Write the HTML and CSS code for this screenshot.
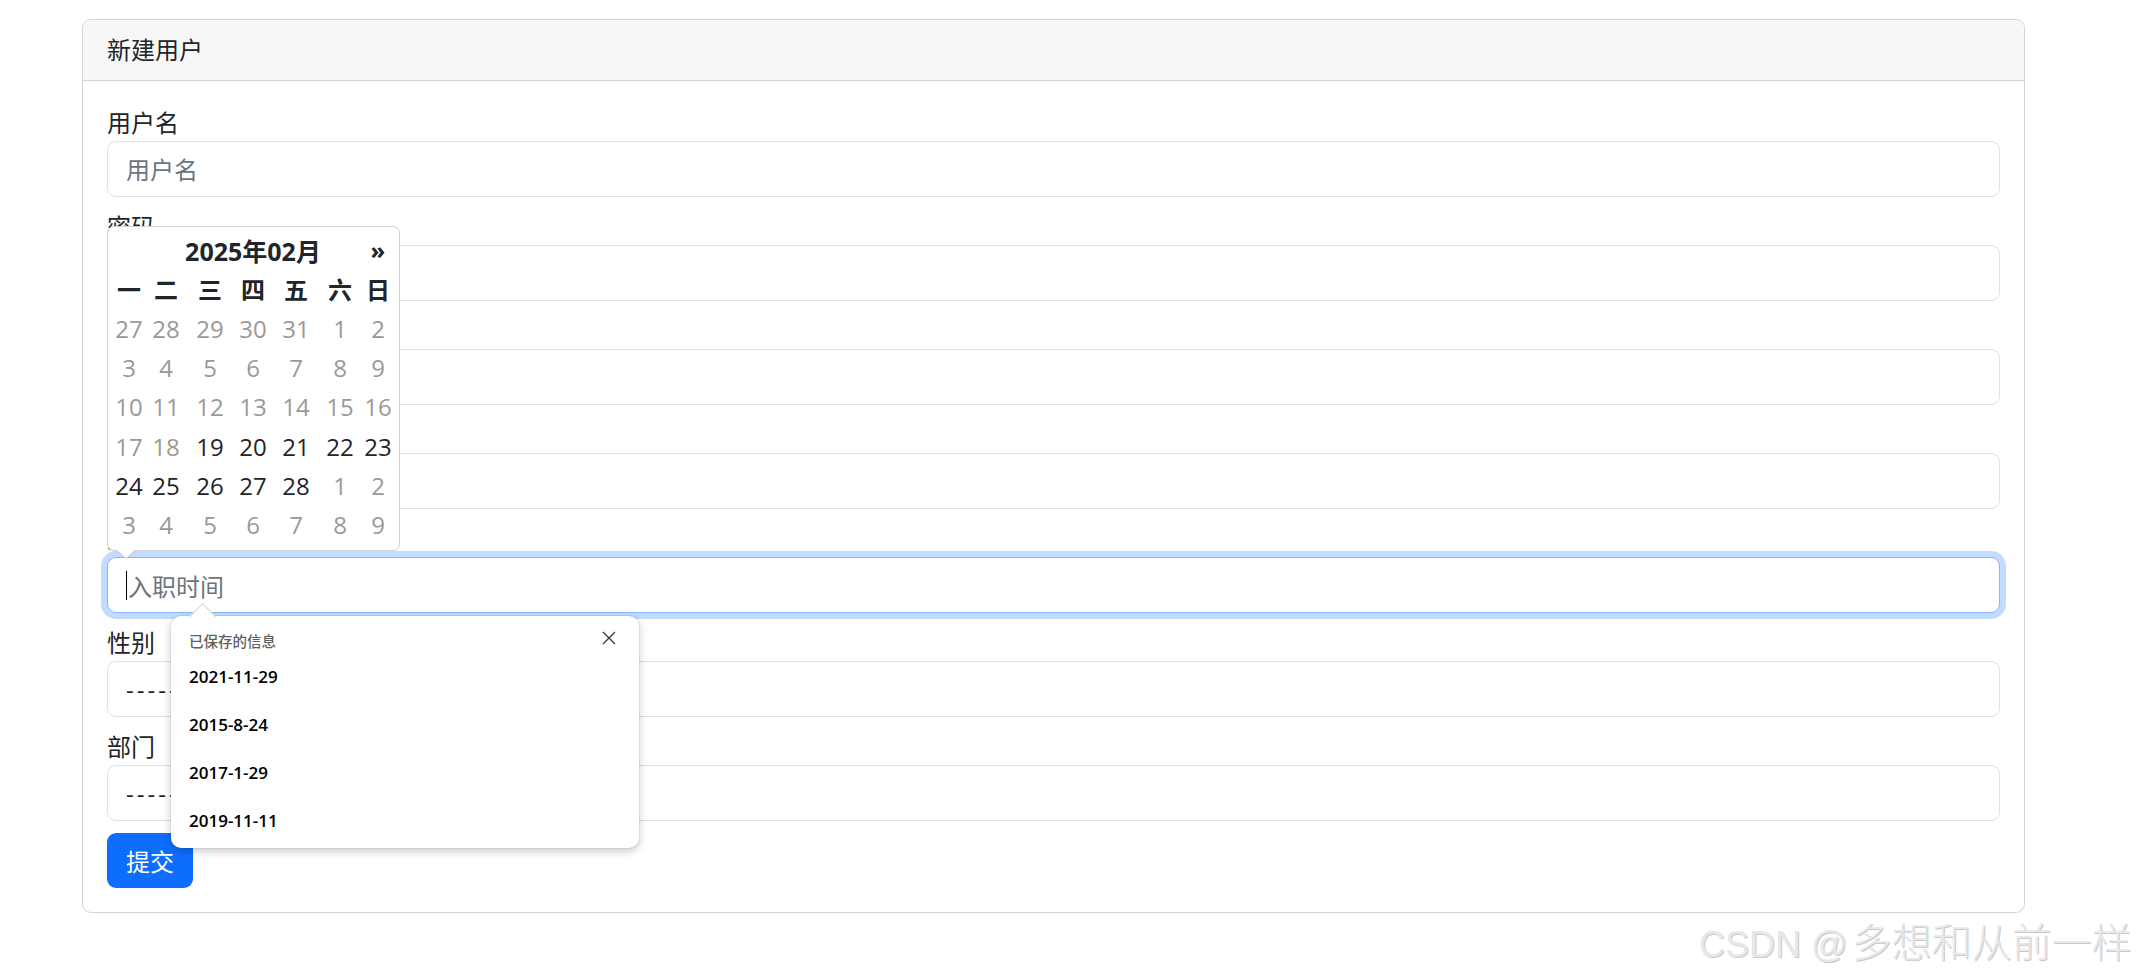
FILE: index.html
```html
<!DOCTYPE html>
<html lang="zh-CN">
<head>
<meta charset="utf-8">
<title>新建用户</title>
<link rel="stylesheet" href="styles.css">
</head>
<body>
<div class="page">
  <div class="card">
    <div class="card-header">新建用户</div>
    <div class="card-body">
      <form class="user-form">
        <div class="field">
          <label class="field-label">用户名</label>
          <input class="form-control" type="text" placeholder="用户名">
        </div>
        <div class="field">
          <label class="field-label">密码</label>
          <input class="form-control" type="password" placeholder="密码">
        </div>
        <div class="field">
          <label class="field-label">年龄</label>
          <input class="form-control" type="text" placeholder="年龄">
        </div>
        <div class="field">
          <label class="field-label">账户余额</label>
          <input class="form-control" type="text" placeholder="账户余额">
        </div>
        <div class="field">
          <label class="field-label">入职时间</label>
          <div class="form-control is-focused"><span class="caret"></span><span class="placeholder">入职时间</span></div>
        </div>
        <div class="field">
          <label class="field-label">性别</label>
          <div class="form-control"><span class="empty-choice">---------</span></div>
        </div>
        <div class="field">
          <label class="field-label">部门</label>
          <div class="form-control"><span class="empty-choice">---------</span></div>
        </div>
        <button class="btn-primary" type="button">提交</button>
      </form>
    </div>
  </div>

  <div class="datepicker">
    <div class="dp-grid">
      <div class="dp-cell dp-head"></div>
      <div class="dp-cell dp-head dp-switch">2025年02月</div>
      <div class="dp-cell dp-head">»</div>

      <div class="dp-cell dp-head">一</div>
      <div class="dp-cell dp-head">二</div>
      <div class="dp-cell dp-head">三</div>
      <div class="dp-cell dp-head">四</div>
      <div class="dp-cell dp-head">五</div>
      <div class="dp-cell dp-head">六</div>
      <div class="dp-cell dp-head">日</div>

      <div class="dp-cell off">27</div><div class="dp-cell off">28</div><div class="dp-cell off">29</div><div class="dp-cell off">30</div><div class="dp-cell off">31</div><div class="dp-cell off">1</div><div class="dp-cell off">2</div>
      <div class="dp-cell off">3</div><div class="dp-cell off">4</div><div class="dp-cell off">5</div><div class="dp-cell off">6</div><div class="dp-cell off">7</div><div class="dp-cell off">8</div><div class="dp-cell off">9</div>
      <div class="dp-cell off">10</div><div class="dp-cell off">11</div><div class="dp-cell off">12</div><div class="dp-cell off">13</div><div class="dp-cell off">14</div><div class="dp-cell off">15</div><div class="dp-cell off">16</div>
      <div class="dp-cell off">17</div><div class="dp-cell off">18</div><div class="dp-cell">19</div><div class="dp-cell">20</div><div class="dp-cell">21</div><div class="dp-cell">22</div><div class="dp-cell">23</div>
      <div class="dp-cell">24</div><div class="dp-cell">25</div><div class="dp-cell">26</div><div class="dp-cell">27</div><div class="dp-cell">28</div><div class="dp-cell off">1</div><div class="dp-cell off">2</div>
      <div class="dp-cell off">3</div><div class="dp-cell off">4</div><div class="dp-cell off">5</div><div class="dp-cell off">6</div><div class="dp-cell off">7</div><div class="dp-cell off">8</div><div class="dp-cell off">9</div>
    </div>
  </div>

  <div class="autofill">
    <span class="af-arrow"></span>
    <div class="af-title">
      <span>已保存的信息</span>
      <svg class="af-close" width="16" height="16" viewBox="0 0 16 16"><path d="M2 2 L14 14 M14 2 L2 14" stroke="#333" stroke-width="1.2" fill="none"/></svg>
    </div>
    <div class="af-item">2021-11-29</div>
    <div class="af-item">2015-8-24</div>
    <div class="af-item">2017-1-29</div>
    <div class="af-item">2019-11-11</div>
  </div>

  <div class="watermark"><span class="wm-latin">CSDN @</span><span class="wm-cjk">多想和从前一样</span></div>
</div>
</body>
</html>
```

FILE: styles.css
```css
html, body {
  margin: 0;
  padding: 0;
  background: #fff;
  overflow: hidden;
}

body {
  font-family: "Open Sans", "Noto Sans CJK SC", sans-serif;
  color: #212529;
}

.page {
  position: relative;
  width: 2149px;
  height: 976px;
  padding: 19px 0 0 82px;
  box-sizing: border-box;
}

.card {
  width: 1943px;
  box-sizing: border-box;
  border: 1px solid #d4d4d4;
  border-radius: 9px;
  background: #fff;
}

.card-header {
  padding: 12px 24px;
  font-size: 24px;
  line-height: 36px;
  background: #f7f7f7;
  border-bottom: 1px solid #d4d4d4;
  border-radius: 9px 9px 0 0;
}

.card-body {
  padding: 24px;
}

.user-form {
  display: flex;
  flex-direction: column;
  align-items: flex-start;
}

.field {
  width: 100%;
  margin-bottom: 12px;
}

.field-label {
  display: block;
  font-size: 24px;
  line-height: 36px;
}

.form-control {
  display: flex;
  align-items: center;
  width: 100%;
  height: 56px;
  box-sizing: border-box;
  padding: 0 18px;
  border: 1px solid #dee2e6;
  border-radius: 9px;
  font-family: "Open Sans", "Noto Sans CJK SC", sans-serif;
  font-size: 24px;
  color: #212529;
  background: #fff;
  outline: none;
}

.form-control::placeholder {
  color: #6c757d;
}

.placeholder {
  color: #6c757d;
}

.empty-choice {
  letter-spacing: 3px;
}

.is-focused {
  border-color: #86b7fe;
  box-shadow: 0 0 0 6px rgba(13, 110, 253, 0.25);
}

.caret {
  display: inline-block;
  width: 1px;
  height: 29px;
  background: #000;
  margin-right: 1px;
}

.btn-primary {
  height: 55px;
  padding: 0 19px;
  border: none;
  border-radius: 9px;
  background: #0d6efd;
  color: #fff;
  font-family: "Open Sans", "Noto Sans CJK SC", sans-serif;
  font-size: 24px;
}

/* date picker overlay */
.datepicker {
  position: absolute;
  left: 107px;
  top: 226px;
  width: 293px;
  height: 325px;
  box-sizing: border-box;
  padding: 3px 5px 2px 6px;
  border: 1px solid #d0d0d0;
  border-radius: 7px;
  background: #fff;
}

.datepicker::before {
  content: "";
  position: absolute;
  left: 8px;
  top: 100%;
  border-left: 10px solid transparent;
  border-right: 10px solid transparent;
  border-top: 9px solid #c8c8c8;
}

.datepicker::after {
  content: "";
  position: absolute;
  left: 9px;
  top: 100%;
  border-left: 9px solid transparent;
  border-right: 9px solid transparent;
  border-top: 8px solid #fff;
}

.dp-grid {
  display: grid;
  grid-template-columns: 30px 44px 44px 42px 44px 44px 32px;
  grid-auto-rows: 39.3px;
  font-size: 24px;
}

.dp-cell {
  display: flex;
  align-items: center;
  justify-content: center;
  color: #212529;
  white-space: nowrap;
}

.dp-cell.off {
  color: #999;
}

.dp-head {
  font-weight: 700;
}

.dp-switch {
  grid-column: span 5;
  font-size: 25px;
}

/* browser autofill overlay */
.autofill {
  position: absolute;
  left: 171px;
  top: 616px;
  width: 468px;
  height: 232px;
  box-sizing: border-box;
  padding: 12px 0 0 0;
  background: #fff;
  border-radius: 10px;
  box-shadow: 0 3px 10px rgba(0, 0, 0, 0.22), 0 0 0 1px rgba(0, 0, 0, 0.05);
}

.af-arrow {
  position: absolute;
  left: 22px;
  top: -9px;
  width: 18px;
  height: 18px;
  background: #fff;
  border-top: 1px solid #d6d6d6;
  border-left: 1px solid #d6d6d6;
  transform: rotate(45deg);
}

.af-title {
  display: flex;
  align-items: center;
  justify-content: space-between;
  height: 24px;
  padding: 0 22px 0 18px;
  font-family: "Noto Sans CJK SC", sans-serif;
  font-size: 14.5px;
  font-weight: 500;
  color: #5f5f5f;
}

.af-close {
  display: block;
  margin-top: -4px;
}

.af-item {
  display: flex;
  align-items: center;
  height: 48px;
  padding-left: 18px;
  font-family: "Open Sans", sans-serif;
  font-size: 17px;
  font-weight: 600;
  color: #000;
}

.watermark {
  position: absolute;
  left: 1699px;
  top: 914px;
  line-height: 52px;
  color: #e8e8e8;
  text-shadow: 1px 1px 0 #c9c9c9;
  white-space: nowrap;
}

.wm-latin {
  font-family: "Liberation Sans", sans-serif;
  font-size: 36px;
}

.wm-cjk {
  font-family: "Noto Sans CJK SC", sans-serif;
  font-size: 40px;
  font-weight: 300;
  margin-left: 4px;
}
```
